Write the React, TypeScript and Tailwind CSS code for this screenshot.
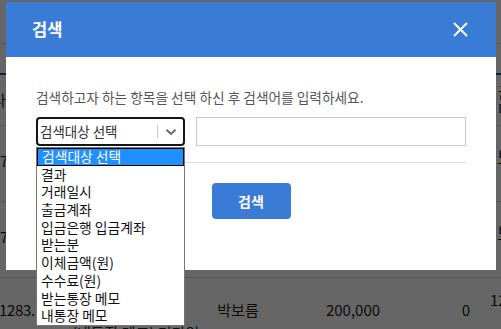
import React from "react";

const OPTIONS = [
  "검색대상 선택",
  "결과",
  "거래일시",
  "출금계좌",
  "입금은행 입금계좌",
  "받는분",
  "이체금액(원)",
  "수수료(원)",
  "받는통장 메모",
  "내통장 메모",
];

function BackgroundPage() {
  return (
    <div className="absolute inset-0 bg-white text-[15px] text-[#222]">
      <div className="h-[44px] border-b border-[#d8d8d8]" />
      <div className="h-[31px] border-b-2 border-[#1f4f9a]" />
      {/* table header */}
      <div className="flex h-[51px] border-b border-[#d8d8d8]">
        <div className="w-[36px] flex items-center justify-end overflow-hidden whitespace-nowrap pr-[30px]">기타</div>
        <div className="flex-1" />
        <div className="w-[29px] flex flex-col justify-center pl-[26px] leading-[17px] whitespace-nowrap overflow-hidden">
          <span>금액</span>
          <span>다운</span>
        </div>
      </div>
      {[0, 1].map((i) => (
        <div key={i} className="flex h-[76px] border-b border-[#d8d8d8]">
          <div className="w-[30px] pt-[24px] whitespace-nowrap overflow-hidden">7'12</div>
          <div className="flex-1" />
          <div className="w-[29px] pt-[19px] pl-[26px] whitespace-nowrap overflow-hidden">
            <span className="underline">변경</span>
          </div>
        </div>
      ))}
      <div className="flex h-[76px]">
        <div className="w-[36px] pt-[21px] flex justify-end overflow-hidden whitespace-nowrap pr-px tracking-[-0.3px]">
          <span>171283.</span>
        </div>
        <div className="w-[164px] pt-[44px] pl-[36px] whitespace-nowrap overflow-hidden">
          (내통장 메모) 기타입금
        </div>
        <div className="w-[76px] pt-[21px] text-center">박보름</div>
        <div className="w-[154px] pt-[21px] text-center">200,000</div>
        <div className="w-[42px] pt-[21px] text-right pr-[2px]">0</div>
        <div className="flex-1 pt-[13px] pl-[18px] leading-[18px] whitespace-nowrap overflow-hidden">
          12:30
        </div>
      </div>
    </div>
  );
}

function ChevronDown() {
  return (
    <svg width="12" height="8" viewBox="0 0 12 8" fill="none">
      <path d="M1.5 1.8 L6 6 L10.5 1.8" stroke="#666" strokeWidth="2" />
    </svg>
  );
}

function CloseIcon() {
  return (
    <svg width="15" height="15" viewBox="0 0 15 15" fill="none">
      <path d="M1 1 L14 14 M14 1 L1 14" stroke="white" strokeWidth="2" />
    </svg>
  );
}

export default function App() {
  return (
    <div className="relative w-[501px] h-[329px] overflow-hidden font-['Noto_Sans_CJK_KR','Malgun_Gothic',sans-serif]">
      <BackgroundPage />
      <div className="absolute inset-0 bg-black/60" />

      {/* Search modal */}
      <div className="absolute left-[6px] top-[2px] w-[490px] h-[268px] bg-white">
        <div className="h-[55px] bg-[#3a7bd5] flex items-center justify-between pl-[26px] pr-[28px]">
          <h2 className="text-[16.5px] font-bold text-white leading-none">검색</h2>
          <button className="w-[15px] h-[15px] flex items-center justify-center">
            <CloseIcon />
          </button>
        </div>

        <div className="px-[30px] pt-[30px]">
          <p className="text-[13.7px] leading-[20px] text-[#555] whitespace-nowrap">
            검색하고자 하는 항목을 선택 하신 후 검색어를 입력하세요.
          </p>

          <div className="mt-[10px] flex gap-[11px]">
            <div className="relative w-[149px] h-[29px]">
              <div className="h-full flex items-center border-2 border-[#151515] rounded-[4px] bg-white">
                <span className="flex-1 pl-[2px] text-[13.5px] text-[#333] whitespace-nowrap">검색대상 선택</span>
                <span className="w-px h-[13px] bg-[#c8c8c8]" />
                <span className="w-[25px] flex items-center justify-center">
                  <ChevronDown />
                </span>
              </div>

              {/* open option list */}
              <ul className="absolute left-0 top-[30px] w-[149px] z-10 bg-white border border-[#767676] text-[13.8px] text-[#111]">
                {OPTIONS.map((o, i) => (
                  <li
                    key={o}
                    className={
                      i === 0
                        ? "h-[17.7px] leading-[14.5px] px-[4px] bg-[#1e90ff] text-white border border-black whitespace-nowrap overflow-hidden"
                        : "h-[17.7px] leading-[17.7px] px-[4px] whitespace-nowrap"
                    }
                  >
                    {o}
                  </li>
                ))}
              </ul>
            </div>
            <input className="flex-1 h-[29px] border border-[#c8c8c8] bg-white outline-none" />
          </div>

          <hr className="mt-[16px] border-0 border-t border-[#dcdcdc]" />

          <div className="mt-[20px] flex justify-center">
            <button className="w-[79px] h-[36px] rounded-[4px] bg-[#3a7bd5] text-white text-[14px] font-bold">
              검색
            </button>
          </div>
        </div>
      </div>
    </div>
  );
}
